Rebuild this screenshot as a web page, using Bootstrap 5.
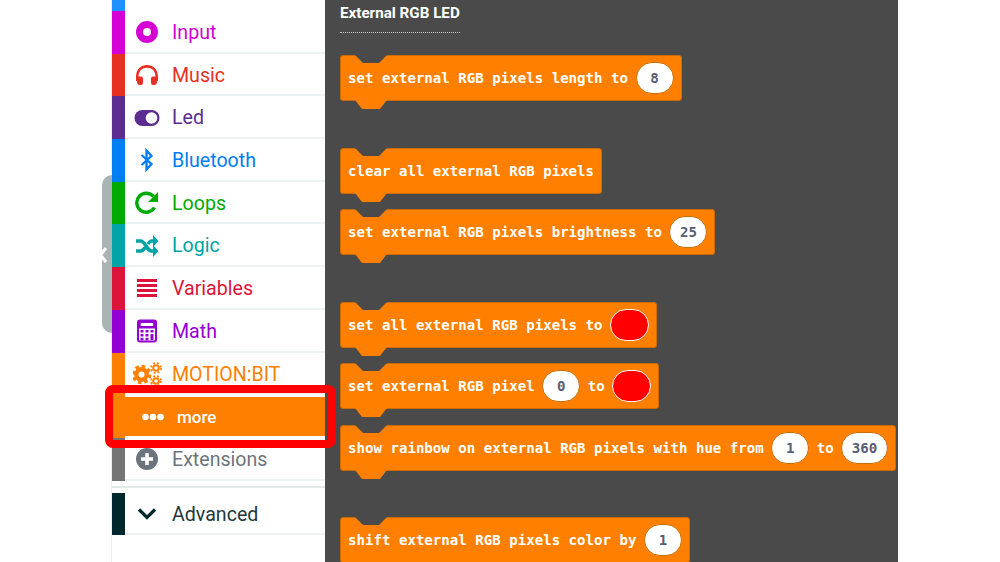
<!DOCTYPE html>
<html lang="en"><head><meta charset="utf-8">
<link rel="stylesheet" href="https://cdn.jsdelivr.net/npm/bootstrap@5.3.0/dist/css/bootstrap.min.css">
<style>
html,body{width:1000px;height:562px;overflow:hidden;background:#fff;font-family:Roboto,"Liberation Sans",sans-serif}
.stage{position:relative;width:1000px;height:562px;overflow:hidden}
.gutter{width:112px;flex:none}
.handle{width:10px;height:158px;margin-top:175px;background:#a9b4b5;border-radius:10px 0 0 10px;position:relative}
.handle svg{position:absolute;left:-3px;top:71px}
.tree{width:213px;flex:none;height:562px;border-left:1px solid #eef1f2;margin-left:-1px;box-sizing:content-box}
.cat{height:42.7px;border-bottom:2px solid #eef1f2;font-size:19.6px;line-height:44px;box-sizing:border-box}
.cat .band{width:13px;height:42.7px;flex:none}
.cat .ico{width:47px;flex:none;padding-right:3px;height:42.7px}
.cat-top{height:11px}
.cat-top .band{width:13px;background:#1e90ff}
.cat-more{background:#ff8000;color:#fff;font-size:17px;font-weight:500;border-top:2px solid #fff;border-bottom:2px solid #fff;line-height:41px}
.cat-more .band{margin-top:-2px}
.cat-more .ico{width:52px;padding-right:0;padding-left:3px;height:39px}
.rule{height:2px;background:#e5e8e9;margin-top:5.500px;margin-bottom:4.500px}
.fly{width:573px;flex:none;background:#4b4a4b;padding-left:15px}
.fly-title{color:#fff;font-size:15.200px;font-weight:700;line-height:20px;padding-top:3px;width:120px;height:33px;border-bottom:1px dotted #ccc;white-space:nowrap}
.blk{position:relative;height:46px;background:#ff8000;border:1px solid #cc6c00;border-radius:3px;padding:1px 7px 0;gap:7.500px;font:700 14.100px/1 "DejaVu Sans Mono",monospace;color:#fff;white-space:nowrap;width:max-content}
.blk::before{content:"";position:absolute;left:14px;top:-1px;width:32px;height:8px;background:#4b4a4b;clip-path:polygon(0 0,100% 0,75% 100%,25% 100%)}
.blk::after{content:"";position:absolute;left:14px;bottom:-9px;width:32px;height:9px;background:#ff8000;clip-path:polygon(0 0,100% 0,78% 100%,22% 100%)}
.pill{display:inline-flex;align-items:center;justify-content:center;height:32px;min-width:38px;padding:0 9.500px;border-radius:16px;background:#fff;color:#575e75;border:1px solid #cc6c00;margin-top:-1px}
.pill-red{background:#f00;border-color:#fff;min-width:39px}
.s1{margin-top:22px}.s2{margin-top:47px}.s3{margin-top:15px}.s4{margin-top:16px}.s5{margin-top:46px}
.redframe{position:absolute;left:105px;top:385px;width:231px;height:63px;border:8px solid #f00;border-radius:8px}
</style></head><body>
<div class="stage d-flex">
  <div class="gutter d-flex justify-content-end"><div class="handle"><svg width="8" height="18" viewBox="0 0 8 18"><path d="M7 2 1.500 9 7 16" fill="none" stroke="#fff" stroke-width="3"/></svg></div></div>
  <div class="tree">
    <div class="d-flex cat-top"><div class="band"></div></div>
    <div class="d-flex cat" style="color:#d400d4"><div class="band" style="background:#d400d4"></div><div class="ico d-flex align-items-center justify-content-center"><svg width="24" height="24" viewBox="0 0 24 24"><circle cx="12" cy="12" r="7.500" fill="none" stroke="#d400d4" stroke-width="7"/></svg></div><span>Input</span></div>
    <div class="d-flex cat" style="color:#e63022"><div class="band" style="background:#e63022"></div><div class="ico d-flex align-items-center justify-content-center"><svg width="24" height="24" viewBox="0 0 24 24" fill="#e63022"><path d="M1 14C1 6 6 2 12 2s11 4 11 12v4h-2.500v-4C20.500 8 17 4.800 12 4.800S3.500 8 3.500 14v4H1z"/><path d="M3 13.500h3a2 2 0 0 1 2 2V20a2 2 0 0 1-2 2H5a3 3 0 0 1-3-3zM21 13.500h-3a2 2 0 0 0-2 2V20a2 2 0 0 0 2 2h1a3 3 0 0 0 3-3z"/></svg></div><span>Music</span></div>
    <div class="d-flex cat" style="color:#5c2d91"><div class="band" style="background:#5c2d91"></div><div class="ico d-flex align-items-center justify-content-center"><svg width="26" height="18" viewBox="0 0 26 18"><rect x="0.500" y="1" width="25" height="16" rx="8" fill="#5c2d91"/><circle cx="17.500" cy="9" r="5.800" fill="#fff"/></svg></div><span>Led</span></div>
    <div class="d-flex cat" style="color:#007ef4"><div class="band" style="background:#007ef4"></div><div class="ico d-flex align-items-center justify-content-center"><svg width="14" height="24" viewBox="0 0 14 24"><path d="M1.500 7 11.500 16 6.500 21.500V2.500L11.500 8 1.500 17" fill="none" stroke="#007ef4" stroke-width="2.300"/></svg></div><span>Bluetooth</span></div>
    <div class="d-flex cat" style="color:#00aa00"><div class="band" style="background:#00aa00"></div><div class="ico d-flex align-items-center justify-content-center"><svg width="24" height="24" viewBox="0 0 24 24"><path d="M19.500 16.500A9.500 9.500 0 1 1 18.500 5.500" fill="none" stroke="#00aa00" stroke-width="3.400"/><path d="M23 1V11H13z" fill="#00aa00"/></svg></div><span>Loops</span></div>
    <div class="d-flex cat" style="color:#00a4a6"><div class="band" style="background:#00a4a6"></div><div class="ico d-flex align-items-center justify-content-center"><svg width="24" height="22" viewBox="0 0 24 22"><path d="M1 6h4.500c5 0 6 10 11 10H19M1 16h4.500c2 0 3.300-1.500 4.500-3.500M13 9c1-1.500 2-3 3.500-3H19" fill="none" stroke="#00a4a6" stroke-width="3.600"/><path d="M18 0l5.500 6L18 12zM18 10l5.500 6L18 22z" fill="#00a4a6"/></svg></div><span>Logic</span></div>
    <div class="d-flex cat" style="color:#dc143c"><div class="band" style="background:#dc143c"></div><div class="ico d-flex align-items-center justify-content-center"><svg width="20" height="20" viewBox="0 0 20 20" fill="#dc143c"><rect y="1" width="20" height="3"/><rect y="6" width="20" height="3"/><rect y="11" width="20" height="3"/><rect y="16" width="20" height="3"/></svg></div><span>Variables</span></div>
    <div class="d-flex cat" style="color:#9400d3"><div class="band" style="background:#9400d3"></div><div class="ico d-flex align-items-center justify-content-center"><svg width="20" height="24" viewBox="0 0 20 24"><rect x="1" y="1.500" width="18" height="21" rx="2" fill="none" stroke="#9400d3" stroke-width="2"/><rect x="1" y="1.500" width="18" height="8" fill="#9400d3"/><rect x="3.800" y="4" width="12.400" height="3" fill="#fff"/><g fill="#9400d3"><rect x="3.500" y="11" width="3" height="2.500"/><rect x="8.500" y="11" width="3" height="2.500"/><rect x="13.500" y="11" width="3" height="2.500"/><rect x="3.500" y="15" width="3" height="2.500"/><rect x="8.500" y="15" width="3" height="2.500"/><rect x="13.500" y="15" width="3" height="6"/><rect x="3.500" y="18.800" width="3" height="2.500"/><rect x="8.500" y="18.800" width="3" height="2.500"/></g></svg></div><span>Math</span></div>
    <div class="d-flex cat" style="color:#ff8000"><div class="band" style="background:#ff8000"></div><div class="ico d-flex align-items-center justify-content-center"><svg width="29" height="24" viewBox="0 0 29 24"><g fill="none" stroke="#ff8000"><circle cx="8.500" cy="12.500" r="5.200" stroke-width="4.400"/><circle cx="8.500" cy="12.500" r="8.300" stroke-width="3" stroke-dasharray="3.600 2.900"/><circle cx="23" cy="6" r="2.800" stroke-width="2"/><circle cx="23" cy="6" r="5" stroke-width="1.800" stroke-dasharray="2 2"/><circle cx="23" cy="19" r="2.800" stroke-width="2"/><circle cx="23" cy="19" r="5" stroke-width="1.800" stroke-dasharray="2 2"/></g></svg></div><span>MOTION:BIT</span></div>
    <div class="d-flex cat cat-more"><div class="band" style="background:#ff8000"></div><div class="ico d-flex align-items-center justify-content-center"><svg width="22" height="8" viewBox="0 0 22 8" fill="#fff"><circle cx="3.500" cy="4" r="3.300"/><circle cx="11" cy="4" r="3.300"/><circle cx="18.500" cy="4" r="3.300"/></svg></div><span>more</span></div>
    <div class="d-flex cat" style="color:#6c757d"><div class="band" style="background:#757575"></div><div class="ico d-flex align-items-center justify-content-center"><svg width="24" height="24" viewBox="0 0 24 24"><circle cx="12" cy="12" r="11" fill="#6c757d"/><path d="M12 6v12M6 12h12" stroke="#fff" stroke-width="3.500"/></svg></div><span>Extensions</span></div>
    <div class="rule"></div>
    <div class="d-flex cat" style="color:#22383e"><div class="band" style="background:#00272b"></div><div class="ico d-flex align-items-center justify-content-center"><svg width="20" height="14" viewBox="0 0 20 14"><path d="M2 2.500l8 8 8-8" fill="none" stroke="#00272b" stroke-width="3.200"/></svg></div><span>Advanced</span></div>
  </div>
  <div class="fly">
    <div class="fly-title">External RGB LED</div>
    <div class="blk d-flex align-items-center s1">set external RGB pixels length to<span class="pill">8</span></div>
    <div class="blk d-flex align-items-center s2">clear all external RGB pixels</div>
    <div class="blk d-flex align-items-center s3">set external RGB pixels brightness to<span class="pill">25</span></div>
    <div class="blk d-flex align-items-center s2">set all external RGB pixels to<span class="pill pill-red"></span></div>
    <div class="blk d-flex align-items-center s3">set external RGB pixel<span class="pill">0</span>to<span class="pill pill-red"></span></div>
    <div class="blk d-flex align-items-center s4">show rainbow on external RGB pixels with hue from<span class="pill">1</span>to<span class="pill">360</span></div>
    <div class="blk d-flex align-items-center s5">shift external RGB pixels color by<span class="pill">1</span></div>
  </div>
  <div class="redframe"></div>
</div>
<script src="https://cdn.jsdelivr.net/npm/bootstrap@5.3.0/dist/js/bootstrap.bundle.min.js"></script>
</body></html>
